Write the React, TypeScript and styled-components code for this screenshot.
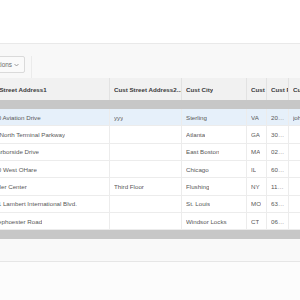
import React from "react";
import styled, { createGlobalStyle } from "styled-components";

const GlobalStyle = createGlobalStyle`
  html, body { margin: 0; padding: 0; }
  body {
    background: #fcfcfc;
    font-family: "Liberation Sans", Arial, sans-serif;
    width: 300px;
    height: 300px;
    overflow: hidden;
  }
`;

const Page = styled.div`
  display: flex;
  flex-direction: column;
  width: 300px;
  height: 300px;
  overflow: hidden;
`;

const TopSpace = styled.div`
  height: 43px;
  background: #ffffff;
  border-bottom: 1px solid #e9e9e9;
  flex-shrink: 0;
`;

const Region = styled.div`
  background: #f8f8f8;
  border-bottom: 1px solid #e6e6e6;
  display: flex;
  flex-direction: column;
  flex-shrink: 0;
`;

const Toolbar = styled.div`
  height: 34px;
  display: flex;
  align-items: center;
  gap: 6px;
  overflow: hidden;
`;

const ActionsButton = styled.button`
  margin-left: -15px;
  height: 17px;
  margin-top: 7px;
  padding: 0 5px;
  border: 1px solid #dadada;
  border-radius: 2px;
  background: #fafafa;
  color: #6a6a6a;
  font-family: "Liberation Sans", Arial, sans-serif;
  font-size: 6.4px;
  display: flex;
  align-items: center;
  gap: 2px;
`;

const Separator = styled.div`
  align-self: flex-end;
  width: 1px;
  height: 22px;
  background: #ebebeb;
`;

const Viewport = styled.div`
  overflow: hidden;
  width: 300px;
`;

const Table = styled.div`
  margin-left: -20px;
  width: 420px;
  display: flex;
  flex-direction: column;
`;

const COLS = "130px 72px 65px 20px 22px 80px";

const HeaderRow = styled.div`
  display: grid;
  grid-template-columns: ${COLS};
  height: 22px;
  background: #f1f1f1;
`;

const HeaderCell = styled.div`
  display: flex;
  align-items: center;
  padding: 0 0 0 4px;
  border-right: 1px solid #e2e2e2;
  font-size: 6.2px;
  font-weight: bold;
  color: #3a3a3a;
  white-space: nowrap;
  overflow: hidden;
  min-width: 0;
`;

const HeaderText = styled.span`
  overflow: hidden;
  white-space: nowrap;
`;

const ScrollBar = styled.div<{ $h: number }>`
  height: ${(p) => p.$h}px;
  background: #c7c7c7;
`;

const Row = styled.div<{ $selected?: boolean }>`
  display: grid;
  grid-template-columns: ${COLS};
  height: 17.33px;
  box-sizing: border-box;
  background: ${(p) => (p.$selected ? "#e6f0fa" : "#ffffff")};
  border-bottom: 1px solid #ececec;
`;

const Cell = styled.div`
  display: flex;
  align-items: center;
  padding: 0 1px 0 4px;
  border-right: 1px solid #ececec;
  font-size: 6.2px;
  color: #585858;
  white-space: nowrap;
  overflow: hidden;
  min-width: 0;
`;

const CellText = styled.span`
  overflow: hidden;
  text-overflow: ellipsis;
  white-space: nowrap;
`;

const FooterArea = styled.div`
  height: 22px;
  background: #f9f9f9;
`;

const Chevron = () => (
  <svg width="5" height="4" viewBox="0 0 5 4" fill="none">
    <path d="M0.5 1 L2.5 3 L4.5 1" stroke="#777" strokeWidth="0.7" />
  </svg>
);

const headers: string[] = [
  "Cust Street Address1",
  "Cust Street Address2...",
  "Cust City",
  "Cust State",
  "Cust Postal Code",
  "Cust Email",
];

const rows: string[][] = [
  ["45020 Aviation Drive", "yyy", "Sterling", "VA", "20166", "john.dulles@example.com"],
  ["6000 North Terminal Parkway", "", "Atlanta", "GA", "30320", ""],
  ["10 Harborside Drive", "", "East Boston", "MA", "02128", ""],
  ["10000 West OHare", "", "Chicago", "IL", "60666", ""],
  ["Traveler Center", "Third Floor", "Flushing", "NY", "11430", ""],
  ["10701 Lambert International Blvd.", "", "St. Louis", "MO", "63145", ""],
  ["Schoephoester Road", "", "Windsor Locks", "CT", "06096", ""],
];

export default function App() {
  return (
    <>
      <GlobalStyle />
      <Page>
        <TopSpace />
        <Region>
          <Toolbar>
            <ActionsButton>
              Actions <Chevron />
            </ActionsButton>
            <Separator />
          </Toolbar>
          <Viewport>
            <Table>
              <HeaderRow>
                {headers.map((h) => (
                  <HeaderCell key={h}>
                    <HeaderText>{h}</HeaderText>
                  </HeaderCell>
                ))}
              </HeaderRow>
              <ScrollBar $h={9} />
              {rows.map((r, i) => (
                <Row key={i} $selected={i === 0}>
                  {r.map((c, j) => (
                    <Cell key={j}>
                      <CellText>{c}</CellText>
                    </Cell>
                  ))}
                </Row>
              ))}
              <ScrollBar $h={9} />
            </Table>
          </Viewport>
          <FooterArea />
        </Region>
      </Page>
    </>
  );
}
